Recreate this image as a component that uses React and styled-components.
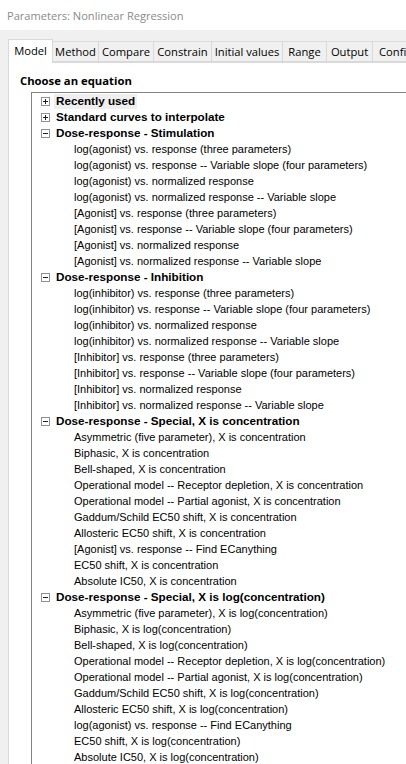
import React from "react";
import styled, { createGlobalStyle } from "styled-components";

const Global = createGlobalStyle`
  html, body { margin: 0; padding: 0; background: #ffffff; }
  body { width: 406px; height: 764px; overflow: hidden; }
`;

const Window = styled.div`
  width: 406px;
  height: 764px;
  overflow: hidden;
  display: flex;
  flex-direction: column;
  background: #f0f0f0;
  font-family: "Open Sans", "Noto Sans", sans-serif;
`;

const TitleBar = styled.div`
  height: 30px;
  flex: none;
  background: #ffffff;
  display: flex;
  align-items: center;
  padding-left: 7px;
  font-size: 11.1px;
  color: #8a8a8a;
`;

const Body = styled.div`
  flex: 1;
  display: flex;
  flex-direction: column;
  padding: 8px 0 0 8px;
  min-width: 0;
`;

const TabRow = styled.div`
  display: flex;
  align-items: flex-end;
  height: 24px;
  flex: none;
  position: relative;
  z-index: 1;
`;

const Tab = styled.div`
  flex: none;
  box-sizing: border-box;
  width: ${(p) => p.$w}px;
  height: ${(p) => (p.$active ? 24 : 21)}px;
  margin-bottom: ${(p) => (p.$active ? -1 : 0)}px;
  background: ${(p) => (p.$active ? "#ffffff" : "#f0f0f0")};
  border: 1px solid #d9d9d9;
  border-left: ${(p) => (p.$first ? "1px solid #d9d9d9" : "none")};
  border-bottom: ${(p) => (p.$active ? "none" : "1px solid #d9d9d9")};
  display: flex;
  align-items: center;
  padding-bottom: ${(p) => (p.$active ? 2 : 0)}px;
  font-size: 11.2px;
  color: #000;
  white-space: nowrap;
  overflow: hidden;
  justify-content: ${(p) => (p.$clip ? "flex-start" : "center")};
  padding-left: ${(p) => (p.$clip ? 6 : 0)}px;
`;

const Panel = styled.div`
  flex: 1;
  background: #ffffff;
  border-left: 1px solid #d9d9d9;
  border-top: 1px solid #d9d9d9;
  display: flex;
  flex-direction: column;
  padding: 8px 0 0 11px;
  width: 420px;
`;

const Heading = styled.div`
  font-size: 11.3px;
  font-weight: 700;
  color: #000;
  height: 19px;
  line-height: 19px;
  margin-bottom: 2px;
`;

const TreeBox = styled.div`
  margin-left: 11px;
  border: 1px solid #828282;
  border-right: none;
  border-bottom: none;
  flex: 1;
  font-family: "Liberation Sans", Arial, sans-serif;
  font-size: 11px;
`;

const Row = styled.div`
  height: 16px;
  display: flex;
  align-items: center;
  padding-left: ${(p) => (p.$child ? 40 : 9)}px;
  white-space: nowrap;
  color: #000;
`;

const Toggle = styled.span`
  flex: none;
  box-sizing: border-box;
  width: 9px;
  height: 9px;
  border: 1px solid #919191;
  background: #fff;
  position: relative;
  margin-right: 4px;
  &::before {
    content: "";
    position: absolute;
    left: 1px;
    top: 3px;
    width: 5px;
    height: 1px;
    background: #202020;
  }
  &::after {
    content: "";
    display: ${(p) => (p.$open ? "none" : "block")};
    position: absolute;
    left: 3px;
    top: 1px;
    width: 1px;
    height: 5px;
    background: #202020;
  }
`;

const Label = styled.span`
  font-weight: ${(p) => (p.$bold ? 700 : 400)};
  font-size: ${(p) => (p.$bold ? "11.7px" : "inherit")};
  background: ${(p) => (p.$hl ? "#efefef" : "transparent")};
  padding: 0 2px;
  height: 15px;
  line-height: 14px;
`;

const tabs = [
  ["Model", 45],
  ["Method", 46],
  ["Compare", 55],
  ["Constrain", 58],
  ["Initial values", 71],
  ["Range", 44],
  ["Output", 46],
  ["Config", 60],
];

const groups = [
  { title: "Recently used", open: false, hl: true },
  { title: "Standard curves to interpolate", open: false },
  {
    title: "Dose-response - Stimulation",
    open: true,
    items: [
      "log(agonist) vs. response (three parameters)",
      "log(agonist) vs. response -- Variable slope (four parameters)",
      "log(agonist) vs. normalized response",
      "log(agonist) vs. normalized response -- Variable slope",
      "[Agonist] vs. response (three parameters)",
      "[Agonist] vs. response -- Variable slope (four parameters)",
      "[Agonist] vs. normalized response",
      "[Agonist] vs. normalized response -- Variable slope",
    ],
  },
  {
    title: "Dose-response - Inhibition",
    open: true,
    items: [
      "log(inhibitor) vs. response (three parameters)",
      "log(inhibitor) vs. response -- Variable slope (four parameters)",
      "log(inhibitor) vs. normalized response",
      "log(inhibitor) vs. normalized response -- Variable slope",
      "[Inhibitor] vs. response (three parameters)",
      "[Inhibitor] vs. response -- Variable slope (four parameters)",
      "[Inhibitor] vs. normalized response",
      "[Inhibitor] vs. normalized response -- Variable slope",
    ],
  },
  {
    title: "Dose-response - Special, X is concentration",
    open: true,
    items: [
      "Asymmetric (five parameter), X is concentration",
      "Biphasic, X is concentration",
      "Bell-shaped, X is concentration",
      "Operational model -- Receptor depletion, X is concentration",
      "Operational model -- Partial agonist, X is concentration",
      "Gaddum/Schild EC50 shift, X is concentration",
      "Allosteric EC50 shift, X is concentration",
      "[Agonist] vs. response -- Find ECanything",
      "EC50 shift, X is concentration",
      "Absolute IC50, X is concentration",
    ],
  },
  {
    title: "Dose-response - Special, X is log(concentration)",
    open: true,
    items: [
      "Asymmetric (five parameter), X is log(concentration)",
      "Biphasic, X is log(concentration)",
      "Bell-shaped, X is log(concentration)",
      "Operational model -- Receptor depletion, X is log(concentration)",
      "Operational model -- Partial agonist, X is log(concentration)",
      "Gaddum/Schild EC50 shift, X is log(concentration)",
      "Allosteric EC50 shift, X is log(concentration)",
      "log(agonist) vs. response -- Find ECanything",
      "EC50 shift, X is log(concentration)",
      "Absolute IC50, X is log(concentration)",
    ],
  },
];

export default function App() {
  return (
    <>
      <Global />
      <Window>
        <TitleBar>Parameters: Nonlinear Regression</TitleBar>
        <Body>
          <TabRow>
            {tabs.map(([t, w], i) => (
              <Tab key={t} $w={w} $active={i === 0} $first={i === 0} $clip={i === tabs.length - 1}>
                {t}
              </Tab>
            ))}
          </TabRow>
          <Panel>
            <Heading>Choose an equation</Heading>
            <TreeBox>
              {groups.map((g) => (
                <React.Fragment key={g.title}>
                  <Row>
                    <Toggle $open={g.open} />
                    <Label $bold $hl={g.hl}>{g.title}</Label>
                  </Row>
                  {g.open &&
                    g.items.map((it) => (
                      <Row key={it} $child>
                        <Label>{it}</Label>
                      </Row>
                    ))}
                </React.Fragment>
              ))}
            </TreeBox>
          </Panel>
        </Body>
      </Window>
    </>
  );
}
